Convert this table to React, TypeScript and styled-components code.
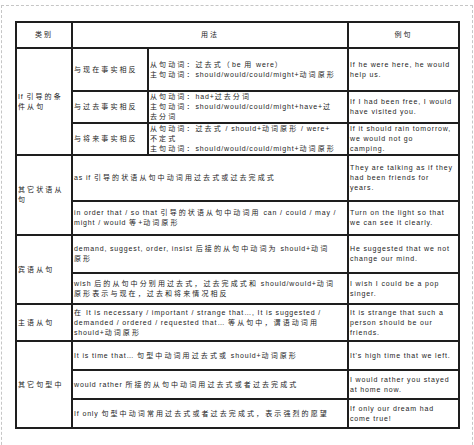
import React from "react";
import styled, { createGlobalStyle } from "styled-components";

const GlobalStyle = createGlobalStyle`
  body {
    margin: 0;
    background: #fff;
  }
`;

interface Row {
  height: number;
  sub?: string;
  usage: string[];
  example: string[];
}

interface Section {
  label: string[];
  rows: Row[];
}

const sections: Section[] = [
  {
    label: ["If 引导的条", "件从句"],
    rows: [
      {
        height: 43,
        sub: "与现在事实相反",
        usage: ["从句动词：过去式（be 用 were）", "主句动词：should/would/could/might+动词原形"],
        example: ["If he were here, he would", "help us."],
      },
      {
        height: 30,
        sub: "与过去事实相反",
        usage: ["从句动词：had+过去分词", "主句动词：should/would/could/might+have+过", "去分词"],
        example: ["If I had been free, I would", "have visited you."],
      },
      {
        height: 30,
        sub: "与将来事实相反",
        usage: ["从句动词：过去式 / should+动词原形  / were+", "不定式", "主句动词：should/would/could/might+动词原形"],
        example: ["If it should rain tomorrow,", "we would not go", "camping."],
      },
    ],
  },
  {
    label: ["其它状语从", "句"],
    rows: [
      {
        height: 46,
        usage: ["as if 引导的状语从句中动词用过去式或过去完成式"],
        example: ["They are talking as if they", "had been friends for", "years."],
      },
      {
        height: 34,
        usage: ["in order that / so that 引导的状语从句中动词用 can / could / may /", "might / would 等+动词原形"],
        example: ["Turn on the light so that", "we can see it clearly."],
      },
    ],
  },
  {
    label: ["宾语从句"],
    rows: [
      {
        height: 38,
        usage: ["demand, suggest, order, insist 后接的从句中动词为 should+动词", "原形"],
        example: ["He suggested that we not", "change our mind."],
      },
      {
        height: 31,
        usage: ["wish 后的从句中分别用过去式，过去完成式和 should/would+动词", "原形表示与现在，过去和将来情况相反"],
        example: ["I wish I could be a pop", "singer."],
      },
    ],
  },
  {
    label: ["主语从句"],
    rows: [
      {
        height: 37,
        usage: [
          "在 It is necessary / important / strange that…, It is suggested /",
          "demanded / ordered / requested that… 等从句中，谓语动词用",
          "should+动词原形",
        ],
        example: ["It is strange that such a", "person should be our", "friends."],
      },
    ],
  },
  {
    label: ["其它句型中"],
    rows: [
      {
        height: 29,
        usage: ["It is time that… 句型中动词用过去式或 should+动词原形"],
        example: ["It's high time that we left."],
      },
      {
        height: 29,
        usage: ["would rather 所接的从句中动词用过去式或者过去完成式"],
        example: ["I would rather you stayed", "at home now."],
      },
      {
        height: 29,
        usage: ["If only 句型中动词常用过去式或者过去完成式，表示强烈的愿望"],
        example: ["If only our dream had", "come true!"],
      },
    ],
  },
];

// split a line into latin / han runs so han gets its wider tracking
const Text = ({ children }: { children: string }) => {
  const parts = children.split(/([\u3000-\u303f\u4e00-\u9fff\uff00-\uffef]+)/);
  return (
    <>
      {parts.map((p, i) => (i % 2 === 1 ? <Han key={i}>{p}</Han> : p ? <span key={i}>{p}</span> : null))}
    </>
  );
};

const Lines = ({ lines }: { lines: string[] }) => (
  <>
    {lines.map((l, i) => (
      <Line key={i}>
        <Text>{l}</Text>
      </Line>
    ))}
  </>
);

export default function App() {
  return (
    <>
      <GlobalStyle />
      <Frame>
        <Table>
          <colgroup>
            <col style={{ width: 56 }} />
            <col style={{ width: 76 }} />
            <col style={{ width: 200 }} />
            <col style={{ width: 111 }} />
          </colgroup>
          <tbody>
            <tr style={{ height: 26 }}>
              <HeadCell>
                <Text>类别</Text>
              </HeadCell>
              <HeadCell colSpan={2}>
                <Text>用法</Text>
              </HeadCell>
              <HeadCell>
                <Text>例句</Text>
              </HeadCell>
            </tr>
            {sections.map((s, si) =>
              s.rows.map((r, ri) => (
                <tr key={`${si}-${ri}`} style={{ height: r.height }}>
                  {ri === 0 && (
                    <Cell rowSpan={s.rows.length}>
                      <Lines lines={s.label} />
                    </Cell>
                  )}
                  {r.sub ? (
                    <>
                      <Cell>
                        <Lines lines={[r.sub]} />
                      </Cell>
                      <Cell>
                        <Lines lines={r.usage} />
                      </Cell>
                    </>
                  ) : (
                    <Cell colSpan={2}>
                      <Lines lines={r.usage} />
                    </Cell>
                  )}
                  <Cell>
                    <Lines lines={r.example} />
                  </Cell>
                </tr>
              ))
            )}
          </tbody>
        </Table>
      </Frame>
    </>
  );
}

const Frame = styled.div`
  box-sizing: border-box;
  width: 472px;
  height: 460px;
  margin: 5px 0 0 1px;
  padding: 15px 0 0 13px;
  border: 1px dashed #c6c6c6;
`;

const Table = styled.table`
  border-collapse: collapse;
  table-layout: fixed;
  width: 443px;
  font-family: "Liberation Sans", "Noto Sans CJK SC", sans-serif;
  font-size: 7px;
  line-height: 10px;
  letter-spacing: 0.85px;
  color: #1c1c1c;
`;

const Cell = styled.td`
  border: 2px solid #1e1e1e;
  padding: 0 0 0 1px;
  vertical-align: middle;
  text-align: left;
  white-space: nowrap;
  overflow: hidden;
`;

const HeadCell = styled(Cell)`
  text-align: center;
  padding: 0;
`;

const Line = styled.div`
  height: 10px;
`;

const Han = styled.span`
  letter-spacing: 2.1px;
`;
